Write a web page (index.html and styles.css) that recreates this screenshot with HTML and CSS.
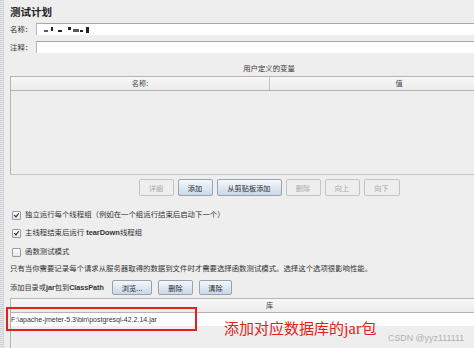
FILE: index.html
```html
<!DOCTYPE html>
<html lang="zh">
<head>
<meta charset="utf-8">
<link rel="stylesheet" href="styles.css">
</head>
<body>
<div class="app">
  <div class="strip"></div>
  <div class="main">
    <div class="title">测试计划</div>
    <div class="field-row">
      <span class="label">名称：</span>
      <div class="input">
        <span class="mos m1"></span><span class="mos m2"></span><span class="mos m3"></span><span class="mos m4"></span><span class="mos m5"></span><span class="mos m6"></span><span class="mos m7"></span>
      </div>
    </div>
    <div class="field-row">
      <span class="label">注释：</span>
      <div class="input"></div>
    </div>
    <div class="group-title">用户定义的变量</div>
    <div class="table vars">
      <div class="thead">
        <div class="th col1">名称:</div>
        <div class="th col2">值</div>
      </div>
      <div class="tbody"></div>
    </div>
    <div class="btn-row">
      <span class="btn dis w35">详细</span>
      <span class="btn on w35">添加</span>
      <span class="btn on w65">从剪贴板添加</span>
      <span class="btn dis w35">删除</span>
      <span class="btn dis w35">向上</span>
      <span class="btn dis w36">向下</span>
    </div>
    <div class="check-row first"><span class="cb checked"></span><span>独立运行每个线程组（例如在一个组运行结束后启动下一个）</span></div>
    <div class="check-row"><span class="cb checked"></span><span>主线程结束后运行 <b class="lat">tearDown</b>线程组</span></div>
    <div class="check-row"><span class="cb"></span><span>函数测试模式</span></div>
    <div class="note">只有当你需要记录每个请求从服务器取得的数据到文件时才需要选择函数测试模式。选择这个选项很影响性能。</div>
    <div class="cp-row">
      <span class="cp-label">添加目录或<b class="lat">jar</b>包到<b class="lat">ClassPath</b></span>
      <span class="btn on w40">浏览...</span>
      <span class="btn on w35">删除</span>
      <span class="btn on w33">清除</span>
    </div>
    <div class="table lib">
      <div class="thead">
        <div class="th full">库</div>
      </div>
      <div class="trow">F:\apache-jmeter-5.3\bin\postgresql-42.2.14.jar</div>
      <div class="tbody2"></div>
    </div>
  </div>
  <div class="mark-box"></div>
  <div class="mark-text">添加对应数据库的<span class="serif">jar</span>包</div>
  <div class="watermark">CSDN @yyz111111</div>
</div>
</body>
</html>
```

FILE: styles.css
```css
html, body {
  margin: 0;
  padding: 0;
}
body {
  width: 474px;
  height: 348px;
  overflow: hidden;
  background: #eeeeee;
  font-family: "Liberation Sans", "Noto Sans CJK SC", sans-serif;
  color: #333333;
}
.app {
  position: relative;
  display: flex;
  width: 474px;
  height: 348px;
  overflow: hidden;
}
.strip {
  flex: 0 0 3px;
  height: 348px;
  background: repeating-linear-gradient(to bottom, #c6cad2 0 1px, #eeeeee 1px 2px);
  border-right: 1px solid #d6d6d6;
}
.main {
  flex: 0 0 518px;
  width: 518px;
  padding: 4px 0 0 6px;
  display: flex;
  flex-direction: column;
}
.title {
  font-size: 10.5px;
  line-height: 14px;
  height: 14px;
  font-weight: bold;
  color: #222222;
  font-family: "Noto Sans CJK SC", sans-serif;
  margin-top: 1px;
}
.field-row {
  display: flex;
  align-items: center;
  height: 12px;
  margin-top: 4px;
}
.field-row + .field-row {
  margin-top: 6px;
}
.label {
  flex: 0 0 26px;
  font-size: 7.4px;
  line-height: 12px;
  font-family: "Noto Sans CJK SC", sans-serif;
  color: #333333;
}
.input {
  flex: 1;
  height: 11px;
  background: #ffffff;
  border-top: 1px solid #a8a8a8;
  border-left: 1px solid #b8b8b8;
  display: flex;
  align-items: center;
  padding-left: 7px;
}
.mos {
  display: inline-block;
  background: #222222;
  height: 2px;
  margin-right: 3px;
}
.m1 { width: 4px; height: 2px; background: #4a5a8a; margin-top: 3px; }
.m2 { width: 2px; height: 4px; margin-top: -2px; margin-right: 5px; }
.m3 { width: 4px; height: 2px; margin-top: 3px; margin-right: 6px; }
.m4 { width: 3px; height: 3px; margin-top: -2px; margin-right: 2px; }
.m5 { width: 6px; height: 3px; margin-top: 1px; margin-right: 1px; background: #555566; }
.m6 { width: 3px; height: 2px; margin-top: 3px; margin-right: 3px; }
.m7 { width: 3px; height: 6px; }
.group-title {
  margin-top: 10px;
  height: 10px;
  line-height: 10px;
  font-size: 7.4px;
  text-align: center;
  font-family: "Noto Sans CJK SC", sans-serif;
  color: #333333;
}
.table {
  margin-top: 3px;
  border-top: 1px solid #b4b4b4;
  border-left: 1px solid #b4b4b4;
  display: flex;
  flex-direction: column;
}
.vars {
  height: 99px;
  box-sizing: border-box;
  border-bottom: 1px solid #c4c4c4;
}
.thead {
  display: flex;
  height: 13px;
  flex: 0 0 13px;
  background: linear-gradient(to bottom, #f7f7f7, #ececec);
  border-bottom: 1px solid #b4b4b4;
}
.th {
  font-size: 7.2px;
  line-height: 13px;
  text-align: center;
  color: #444444;
  font-family: "Noto Sans CJK SC", sans-serif;
}
.col1 {
  flex: 0 0 258px;
  border-right: 1px solid #c4c4c4;
}
.col2 {
  flex: 1;
}
.full {
  flex: 1;
}
.tbody {
  flex: 1;
  background: #eeeeee;
}
.btn-row {
  display: flex;
  justify-content: center;
  gap: 4px;
  margin-top: 4px;
  height: 17px;
  flex: 0 0 17px;
}
.btn {
  box-sizing: border-box;
  height: 17px;
  display: inline-flex;
  align-items: center;
  justify-content: center;
  font-size: 7.2px;
  font-family: "Noto Sans CJK SC", sans-serif;
  border-radius: 2px;
}
.btn.dis {
  border: 1px solid #c4c4c4;
  background: #eeeeee;
  color: #a8a8a8;
}
.btn.on {
  border: 1px solid #9aa3ad;
  background: linear-gradient(to bottom, #f4f8fc 0%, #dfe8f2 50%, #c9d8e8 100%);
  color: #2a2a2a;
}
.w33 { width: 33px; }
.w35 { width: 35px; }
.w36 { width: 36px; }
.w40 { width: 40px; }
.w65 { width: 65px; }
.check-row {
  display: flex;
  align-items: center;
  height: 18px;
  flex: 0 0 18px;
  gap: 4px;
  padding-left: 2px;
  font-size: 7.4px;
  line-height: 10px;
  font-family: "Liberation Sans", "Noto Sans CJK SC", sans-serif;
  color: #333333;
}
.check-row.first {
  margin-top: 10px;
}
.check-row + .check-row + .check-row {
  margin-top: 1px;
}
.cb {
  position: relative;
  box-sizing: border-box;
  width: 9px;
  height: 9px;
  border: 1px solid #9a9a9a;
  background: linear-gradient(to bottom, #ffffff, #e2e6ec);
  border-radius: 1px;
}
.cb.checked::after {
  content: "";
  position: absolute;
  left: 2px;
  top: 0px;
  width: 2px;
  height: 4px;
  border-right: 1.5px solid #222222;
  border-bottom: 1.5px solid #222222;
  transform: rotate(40deg);
}
.lat {
  font-family: "Liberation Sans", sans-serif;
  font-weight: bold;
  color: #333333;
}
.note {
  height: 14px;
  flex: 0 0 14px;
  line-height: 14px;
  font-size: 7.4px;
  font-family: "Noto Sans CJK SC", sans-serif;
  color: #333333;
  white-space: nowrap;
}
.cp-row {
  display: flex;
  align-items: center;
  gap: 6px;
  margin-top: 4px;
  height: 17px;
  flex: 0 0 17px;
}
.cp-label {
  font-size: 7.2px;
  line-height: 10px;
  font-family: "Liberation Sans", "Noto Sans CJK SC", sans-serif;
  color: #333333;
  margin-right: -2px;
  width: 98px;
  white-space: nowrap;
}
.cp-row .btn {
  height: 15px;
}
.lib {
  flex: 1;
  margin-top: 2px;
}
.trow {
  height: 13px;
  flex: 0 0 13px;
  line-height: 13px;
  background: #ffffff;
  font-size: 7px;
  font-family: "Liberation Sans", sans-serif;
  color: #333333;
  white-space: nowrap;
}
.tbody2 {
  flex: 1;
  background: #eeeeee;
}
.mark-box {
  position: absolute;
  left: 6px;
  top: 307px;
  width: 187px;
  height: 20px;
  border: 2px solid #e3211b;
}
.mark-text {
  position: absolute;
  left: 224px;
  top: 318px;
  font-size: 15px;
  line-height: 20px;
  font-family: "Noto Sans CJK SC", serif;
  color: #e3211b;
  white-space: nowrap;
}
.serif {
  font-family: "Liberation Serif", serif;
  font-size: 16.5px;
}
.watermark {
  position: absolute;
  left: 388px;
  top: 332px;
  font-size: 8.9px;
  line-height: 12px;
  font-family: "Liberation Sans", sans-serif;
  color: #b0b0b0;
  white-space: nowrap;
}
```
